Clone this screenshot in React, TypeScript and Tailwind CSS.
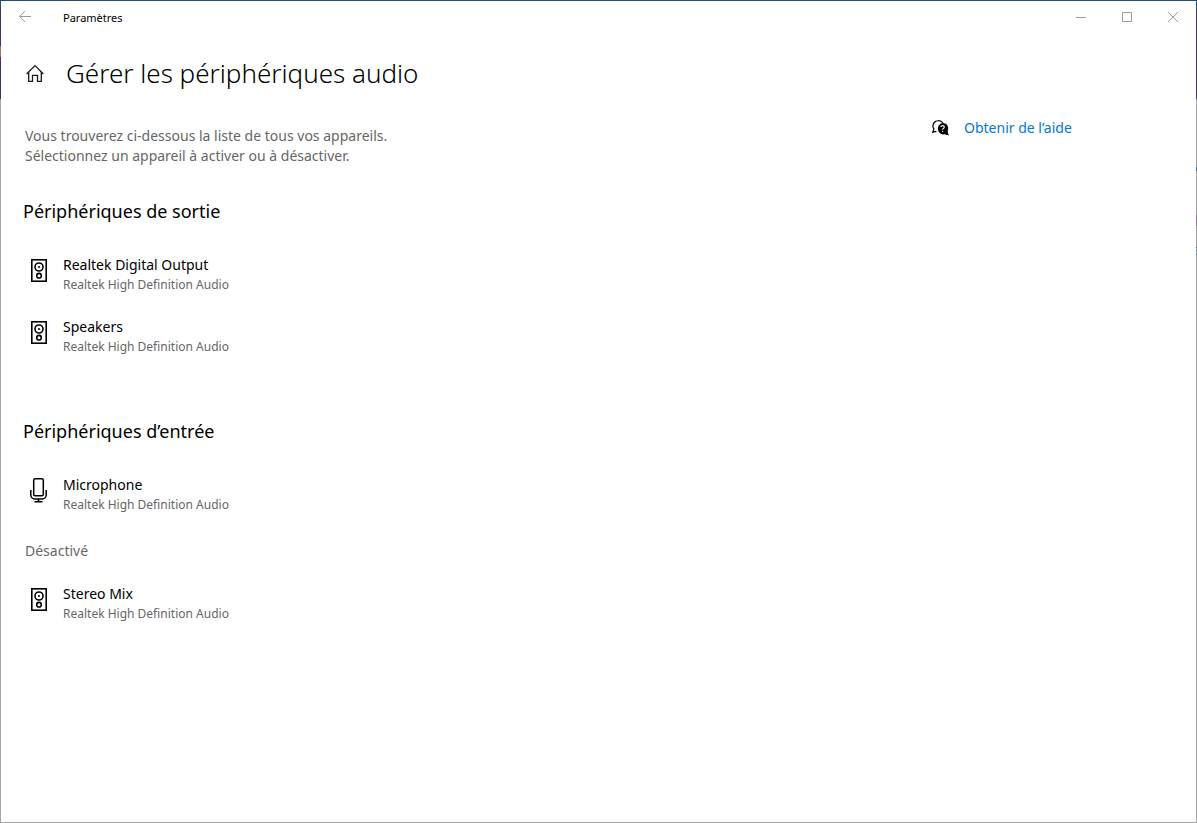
import type { ReactNode } from "react";

function SpeakerIcon() {
  return (
    <svg width="16" height="23" viewBox="0 0 16 23" fill="none" stroke="#000" aria-hidden="true">
      <rect x="0.8" y="0.8" width="14.4" height="21.4" strokeWidth="1.6" />
      <circle cx="8" cy="8" r="4" strokeWidth="1.6" />
      <circle cx="8" cy="8" r="1" fill="#000" stroke="none" />
      <circle cx="8" cy="16.7" r="2.3" strokeWidth="1.6" />
    </svg>
  );
}

function MicrophoneIcon() {
  return (
    <svg width="18" height="25" viewBox="0 0 18 25" fill="none" stroke="#000" strokeWidth="1.5" aria-hidden="true">
      <rect x="3.7" y="0.8" width="9.6" height="17" rx="1.4" />
      <path d="M0.8 12V17a4 4 0 0 0 4 4h7.4a4 4 0 0 0 4-4v-5M8.5 21v3M4.5 23.7h8" />
    </svg>
  );
}

function HomeIcon() {
  return (
    <svg width="18" height="18" viewBox="0 0 18 18" fill="none" stroke="#1a1a1a" strokeWidth="1.3" aria-hidden="true">
      <path d="M0.6 10 9 1.6l8.4 8.4M2.7 8v9.3h3.8v-6h5v6h3.8V8" />
    </svg>
  );
}

function HelpIcon() {
  return (
    <svg width="17" height="17" viewBox="0 0 17 17" fill="none" aria-hidden="true">
      <path
        d="M11 3A5.4 5.4 0 0 0 6.2.7 5.3 5.3 0 0 0 .9 5.9c0 1.2.4 2.2 1 3L.8 12.2l3.6-.9"
        stroke="#000"
        strokeWidth="1.2"
      />
      <path d="M10.5 2.9a5.7 5.7 0 0 1 5.1 8.3l1.2 4.2-4-1.1a5.8 5.8 0 1 1-2.3-11.4Z" fill="#000" />
      <path d="M8.9 7.1c0-2 3.4-2 3.4 0 0 1.3-1.7 1.2-1.7 2.6M10.6 10.8v1.2" stroke="#fff" strokeWidth="1.1" />
    </svg>
  );
}

function TitleBar() {
  const control = "flex h-8 w-[46px] items-center justify-center hover:bg-gray-200";
  return (
    <header className="flex h-8 items-center">
      <button type="button" aria-label="Retour" className="flex h-8 w-12 items-center justify-center">
        <svg width="12" height="12" viewBox="0 0 12 12" fill="none" stroke="#999" aria-hidden="true">
          <path d="M12 5.5H.8M6 .1.7 5.5 6 10.9" />
        </svg>
      </button>
      <span className="ml-3.5 flex-1 pt-0.5 text-[11px] leading-4">Paramètres</span>
      <button type="button" aria-label="Réduire" className={control}>
        <svg width="10" height="10" viewBox="0 0 10 10" stroke="#999" aria-hidden="true">
          <path d="M0 5.5h10" />
        </svg>
      </button>
      <button type="button" aria-label="Agrandir" className={control}>
        <svg width="10" height="10" viewBox="0 0 10 10" fill="none" stroke="#999" aria-hidden="true">
          <path d="M.5.5h9v9h-9z" />
        </svg>
      </button>
      <button type="button" aria-label="Fermer" className={control}>
        <svg width="10" height="10" viewBox="0 0 10 10" stroke="#999" aria-hidden="true">
          <path d="m0 0 10 10M10 0 0 10" />
        </svg>
      </button>
    </header>
  );
}

function Device({ icon, name }: { icon: ReactNode; name: string }) {
  return (
    <li>
      <button type="button" className="flex h-[62px] w-full items-start pt-3 text-left">
        <span className="flex h-8 w-[30px] shrink-0 items-center justify-center">{icon}</span>
        <span className="ml-[9px] flex flex-col pt-px">
          <span className="text-[14px] leading-5">{name}</span>
          <span className="text-[12px] leading-5 text-[#666]">Realtek High Definition Audio</span>
        </span>
      </button>
    </li>
  );
}

function LeftEdge() {
  return (
    <div className="flex w-px flex-col" aria-hidden="true">
      <div className="h-2 bg-[#1f4e79]" />
      <div className="h-[37px] bg-[#46305c]" />
      <div className="h-[11px] bg-[#b0705c]" />
      <div className="h-[42px] bg-[#46305c]" />
      <div className="flex-1 bg-[#a6a6a6]" />
    </div>
  );
}

function RightEdge() {
  return (
    <div className="flex w-px flex-col" aria-hidden="true">
      <div className="h-2 bg-[#1f4e79]" />
      <div className="h-[90px] bg-[#46385c]" />
      <div className="h-[68px] bg-[#a6a6a6]" />
      <div className="h-1 bg-[#3b7593]" />
      <div className="h-[44px] bg-[#a6a6a6]" />
      <div className="h-[11px] bg-[#857787]" />
      <div className="h-[21px] bg-[#a6a6a6]" />
      <div className="h-px bg-[#555]" />
      <div className="h-0.5 bg-[#a6a6a6]" />
      <div className="h-px bg-[#3b6f9c]" />
      <div className="h-[3px] bg-[#a6a6a6]" />
      <div className="h-px bg-[#3b6f9c]" />
      <div className="flex-1 bg-[#a6a6a6]" />
    </div>
  );
}

export default function App() {
  return (
    <div className="flex min-h-screen flex-col border-t border-b border-t-[#1f4e79] border-b-[#a6a6a6] bg-white font-['Noto_Sans','Open_Sans',sans-serif] text-black">
      <div className="flex flex-1">
        <LeftEdge />
        <div className="min-w-0 flex-1">
          <TitleBar />
          <div className="flex h-20 items-center pl-[25px]">
            <button type="button" aria-label="Accueil">
              <HomeIcon />
            </button>
            <h1 className="ml-[22px] text-[26px] leading-9 font-light">Gérer les périphériques audio</h1>
          </div>
          <div className="flex items-start">
            <main className="min-w-0 flex-1 pl-[22px]">
              <p className="mt-[13px] pl-0.5 text-[14px] leading-5 text-[#666]">
                Vous trouverez ci-dessous la liste de tous vos appareils.
                <br />
                Sélectionnez un appareil à activer ou à désactiver.
              </p>
              <section className="mt-[31px]">
                <h2 className="text-[18px] leading-7">Périphériques de sortie</h2>
                <ul className="mt-[17px] pl-px">
                  <Device icon={<SpeakerIcon />} name="Realtek Digital Output" />
                  <Device icon={<SpeakerIcon />} name="Speakers" />
                </ul>
              </section>
              <section className="mt-[51px]">
                <h2 className="text-[18px] leading-7">Périphériques d’entrée</h2>
                <ul className="mt-[17px] pl-px">
                  <Device icon={<MicrophoneIcon />} name="Microphone" />
                </ul>
                <h3 className="mt-[17px] pl-0.5 text-[14px] leading-5 text-[#666]">Désactivé</h3>
                <ul className="mt-[10px] pl-px">
                  <Device icon={<SpeakerIcon />} name="Stereo Mix" />
                </ul>
              </section>
            </main>
            <aside className="w-[264px] shrink-0 pt-[5px]">
              <a href="#aide" className="flex items-center gap-[15px] text-[14px] leading-5 text-[#0078d7]">
                <HelpIcon />
                Obtenir de l’aide
              </a>
            </aside>
          </div>
        </div>
        <RightEdge />
      </div>
    </div>
  );
}
